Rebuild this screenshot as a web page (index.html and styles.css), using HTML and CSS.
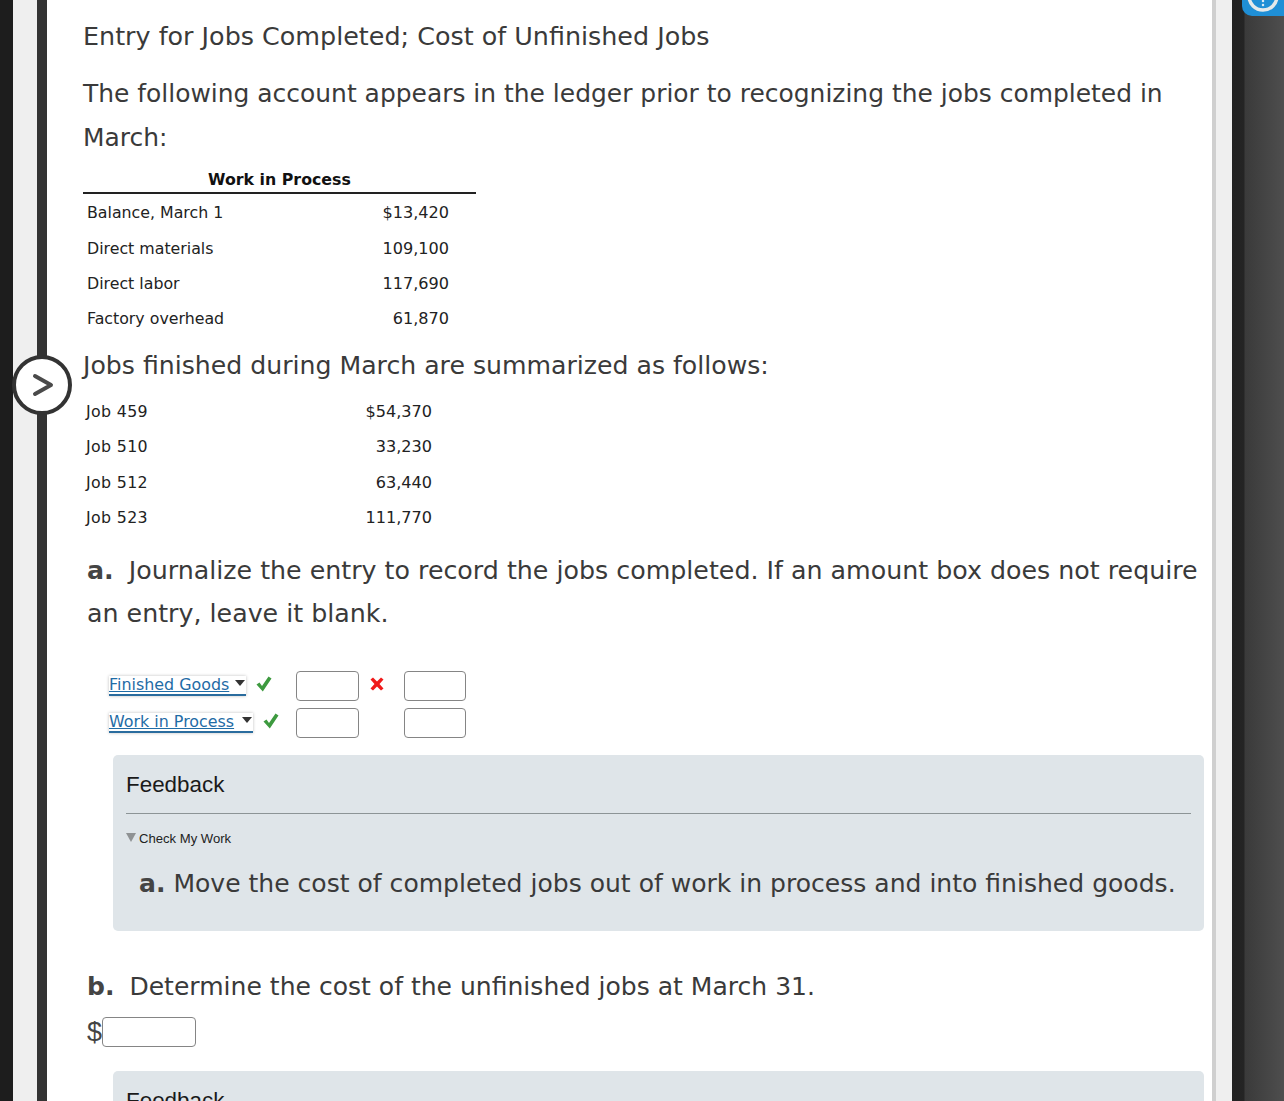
FILE: index.html
```html
<!DOCTYPE html>
<html lang="en">
<head>
<meta charset="utf-8">
<title>Entry for Jobs Completed</title>
<link rel="stylesheet" href="styles.css">
</head>
<body>
<div class="page">
  <div class="edge"></div>
  <div class="gutter"></div>
  <div class="rail"></div>
  <main class="sheet">
    <h1 class="title">Entry for Jobs Completed; Cost of Unfinished Jobs</h1>
    <p class="lead">The following account appears in the ledger prior to recognizing the jobs completed in March:</p>
    <table class="ledger">
      <thead><tr><th colspan="2">Work in Process</th></tr></thead>
      <tbody>
        <tr><td>Balance, March 1</td><td class="num">$13,420</td></tr>
        <tr><td>Direct materials</td><td class="num">109,100</td></tr>
        <tr><td>Direct labor</td><td class="num">117,690</td></tr>
        <tr><td>Factory overhead</td><td class="num">61,870</td></tr>
      </tbody>
    </table>
    <p class="lead jobs-lead">Jobs finished during March are summarized as follows:</p>
    <table class="jobs">
      <tbody>
        <tr><td>Job 459</td><td class="num">$54,370</td></tr>
        <tr><td>Job 510</td><td class="num">33,230</td></tr>
        <tr><td>Job 512</td><td class="num">63,440</td></tr>
        <tr><td>Job 523</td><td class="num">111,770</td></tr>
      </tbody>
    </table>
    <p class="question"><b>a.</b> <span class="q-text">Journalize the entry to record the jobs completed. If an amount box does not require an entry, leave it blank.</span></p>
    <div class="entries">
      <div class="entry">
        <span class="pick">Finished Goods<svg class="caret" viewBox="0 0 10 6"><path d="M0 0h10L5 6z"/></svg></span>
        <svg class="check" viewBox="0 0 16 16"><path d="M0.5 8.5 3.5 6.5 6 10 12.5 0.5 15.5 2.5 6.8 15.5z"/></svg>
        <span class="box debit"></span>
        <svg class="cross" viewBox="0 0 14 14"><path d="M0.5 2.5 3 0.5 7 4.5 11 0.5 13.5 2.5 9.5 7 13.5 11.5 11 13.5 7 9.5 3 13.5 0.5 11.5 4.5 7z"/></svg>
        <span class="box credit"></span>
      </div>
      <div class="entry">
        <span class="pick pick-wide">Work in Process<svg class="caret" viewBox="0 0 10 6"><path d="M0 0h10L5 6z"/></svg></span>
        <svg class="check" viewBox="0 0 16 16"><path d="M0.5 8.5 3.5 6.5 6 10 12.5 0.5 15.5 2.5 6.8 15.5z"/></svg>
        <span class="box debit"></span>
        <span class="box credit"></span>
      </div>
    </div>
    <section class="feedback">
      <h2 class="fb-title">Feedback</h2>
      <div class="fb-toggle"><svg class="tri" viewBox="0 0 10 9"><path d="M0 0h10L5 9z"/></svg>Check My Work</div>
      <p class="fb-text"><b>a.</b> Move the cost of completed jobs out of work in process and into finished goods.</p>
    </section>
    <p class="question part-b"><b>b.</b> <span class="q-text">Determine the cost of the unfinished jobs at March 31.</span></p>
    <div class="dollar"><span class="sign">$</span><span class="box wide"></span></div>
    <section class="feedback feedback-b">
      <h2 class="fb-title">Feedback</h2>
    </section>
  </main>
  <div class="side-line"></div>
  <div class="side-light"></div>
  <div class="side-dark"></div>
</div>
<button class="toggle" type="button" aria-label="Expand"><svg viewBox="0 0 24 28"><path d="M5 5 21 14 5 23"/></svg></button>
<div class="help"><svg viewBox="0 0 44 20"><circle cx="21" cy="-4" r="14"/><path class="dots" d="M21 1v.1M21 5v.1"/></svg></div>
</body>
</html>
```
FILE: styles.css
```css
html, body { margin: 0; padding: 0; }
body { width: 1284px; height: 1101px; overflow: hidden; position: relative; background: #fff; font-family: "DejaVu Sans", Verdana, sans-serif; color: #333; }
.page { display: flex; height: 1101px; overflow: hidden; }
.edge { width: 13px; background: #1d1d1d; }
.gutter { width: 24px; background: #efefef; }
.rail { width: 10px; background: #333; }
.sheet { width: 1165px; box-sizing: border-box; padding: 17px 0 0 36px; background: #fff; }
.side-line { width: 4px; background: #cfcfcf; }
.side-light { width: 16px; background: #efefef; }
.side-dark { width: 52px; background: linear-gradient(90deg, #222 0, #242424 12px, #3a3a3a 13px, #4e4e4e 100%); }
.title { margin: 0; font-size: 25.4px; line-height: 38px; font-weight: 400; color: #3a3a3a; }
.lead { margin: 17px 20px 0 0; font-size: 24.95px; line-height: 44px; color: #3a3a3a; }
.ledger, .jobs { border-collapse: collapse; font-size: 15.8px; color: #222; }
.ledger { margin-top: 10px; width: 393px; }
.ledger th { padding: 0 0 2px; font-size: 15.8px; line-height: 20px; font-weight: 700; color: #111; border-bottom: 2px solid #222; text-align: center; }
.ledger td, .jobs td { height: 35.4px; padding: 0 0 0 4px; }
.ledger tbody tr:first-child td { padding-top: 1px; }
.num { font-size: 16.1px; }
.ledger .num { text-align: right; padding-right: 27px; }
.jobs-lead { margin-top: 7px; font-size: 25.18px; }
.jobs { margin-top: 6px; width: 350px; letter-spacing: .35px; }
.jobs td { padding-left: 3px; }
.jobs .num { text-align: right; padding-right: 1px; letter-spacing: 0; }
.question { margin: 0; padding: 0 4px; font-size: 25.3px; line-height: 43px; color: #3a3a3a; }
.jobs + .question { margin-top: 14px; }
.question b { color: #444; margin-right: 7px; }
.entries { margin: 32px 0 0 26px; }
.entry { position: relative; height: 37px; display: flex; align-items: center; }
.pick { display: inline-flex; align-items: center; height: 18px; padding-right: 1px; border-bottom: 2px solid #2a6c9e; box-shadow: 0 0 3px rgba(0,0,0,.25); background: #fff; color: #1f6ca6; font-size: 15.9px; line-height: 18px; text-decoration: underline; white-space: nowrap; }
.caret { width: 10px; height: 6px; margin: 0 0 4px 6px; fill: #333; }
.pick-wide .caret { margin-left: 8px; }
.check { width: 16px; height: 16px; margin: -4px 0 0 10px; fill: #3d9a3f; flex: none; }
.box { display: block; box-sizing: border-box; width: 63px; height: 30px; background: #fff; border: 1px solid #858585; border-radius: 4px; }
.entry .debit { position: absolute; left: 187px; top: 4px; }
.entry .credit { position: absolute; left: 295px; top: 4px; width: 62px; }
.cross { position: absolute; left: 261px; top: 10px; width: 14px; height: 14px; fill: #f01a1a; }
.feedback { box-sizing: border-box; margin: 14px 0 0 30px; width: 1091px; height: 176px; padding: 14px 13px 0; background: #dfe5e9; border-radius: 5px; }
.feedback-b { margin-top: 24px; height: 60px; }
.fb-title { margin: 0; padding-bottom: 12px; height: 32px; box-sizing: content-box; border-bottom: 1px solid #8c9496; font: 400 22.4px/32px "Liberation Sans", Arial, sans-serif; color: #1a1a1a; }
.fb-toggle { display: flex; align-items: center; margin-top: 17px; height: 16px; font: 13.1px/16px "Liberation Sans", Arial, sans-serif; color: #222; }
.tri { width: 10px; height: 9px; margin: -3px 3px 0 0; fill: #8f9294; }
.fb-text { margin: 19px 0 0 13px; font-size: 25.06px; line-height: 36px; color: #3a3a3a; white-space: nowrap; }
.fb-text b { color: #444; }
.part-b { margin-top: 34px; font-size: 25.06px; }
.dollar { display: flex; align-items: center; margin: 9px 0 0 4px; height: 30px; }
.sign { font: 27px/30px "Liberation Sans", Arial, sans-serif; color: #444; }
.box.wide { width: 94px; height: 30px; }
.toggle { position: absolute; left: 12px; top: 355px; width: 60px; height: 60px; padding: 0; box-sizing: border-box; border: 4px solid #333; border-radius: 50%; background: #fff; display: flex; align-items: center; justify-content: center; }
.toggle svg { width: 24px; height: 28px; fill: none; stroke: #4a4a4a; stroke-width: 4; stroke-linecap: round; stroke-linejoin: round; }
.help { position: absolute; left: 1242px; top: 0; width: 42px; height: 16px; background: #1f8fd6; border-radius: 0 0 0 10px; overflow: hidden; }
.help svg { display: block; width: 44px; height: 20px; fill: none; stroke: #e4e9ea; stroke-width: 3.5; }
.help .dots { stroke: #d7e9f5; stroke-width: 2.5; stroke-linecap: round; }
```
